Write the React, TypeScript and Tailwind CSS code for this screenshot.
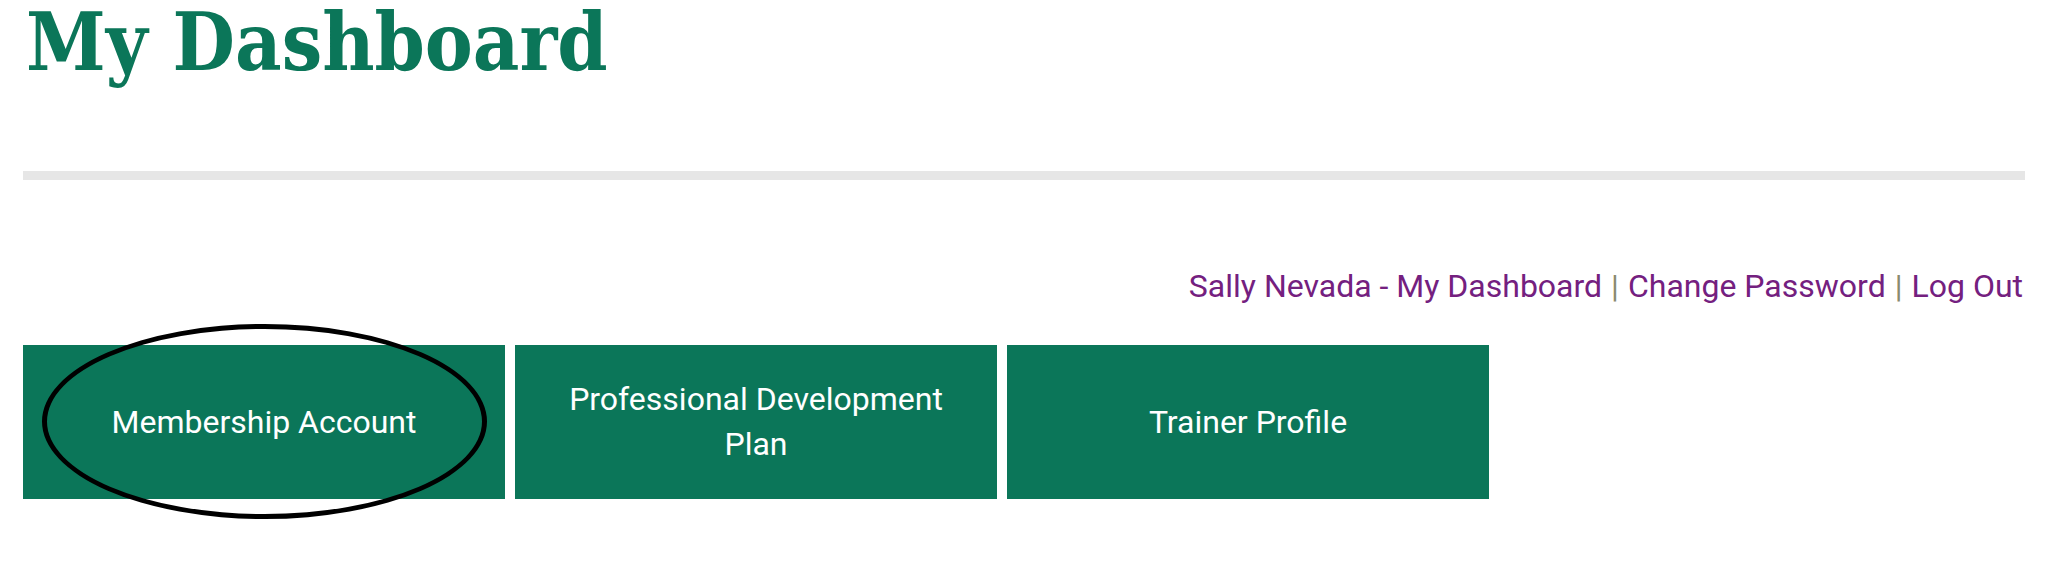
const tiles = [
  { label: "Membership Account", circled: true },
  { label: "Professional Development Plan", circled: false },
  { label: "Trainer Profile", circled: false },
];

export default function App() {
  return (
    <div className="relative w-[2048px] h-[562px] bg-white overflow-hidden px-[23px] pt-[2px]">
      <h1
        className="pl-[3px] text-[#0b7659] text-[80px] font-bold leading-[80px] [font-stretch:condensed]"
        style={{ fontFamily: '"DejaVu Serif Condensed", "DejaVu Serif", serif' }}
      >
        My Dashboard
      </h1>

      <div className="mt-[89px] h-[9px] bg-[#e6e6e6]" />

      {/* user links */}
      <div
        className="mt-[90px] flex justify-end pr-[2px] text-[32px] leading-none text-[#74207f]"
        style={{ fontFamily: "Roboto, sans-serif" }}
      >
        <span>Sally Nevada - My Dashboard</span>
        <span className="mx-[9px] text-[#8a8a70]">|</span>
        <span>Change Password</span>
        <span className="mx-[9px] text-[#8a8a70]">|</span>
        <span>Log Out</span>
      </div>

      {/* dashboard tiles */}
      <div className="mt-[43px] flex gap-[10px]" style={{ fontFamily: "Roboto, sans-serif" }}>
        {tiles.map((t) => (
          <div key={t.label} className="relative">
            <div className="w-[482px] h-[154px] bg-[#0b7659] flex items-center justify-center text-center text-white text-[32px] leading-[45px] px-[30px]">
              {t.label}
            </div>
            {t.circled && (
              <div className="absolute left-[19px] top-[-21px] w-[445px] h-[195px] rounded-[50%] border-[5px] border-black" />
            )}
          </div>
        ))}
      </div>
    </div>
  );
}
